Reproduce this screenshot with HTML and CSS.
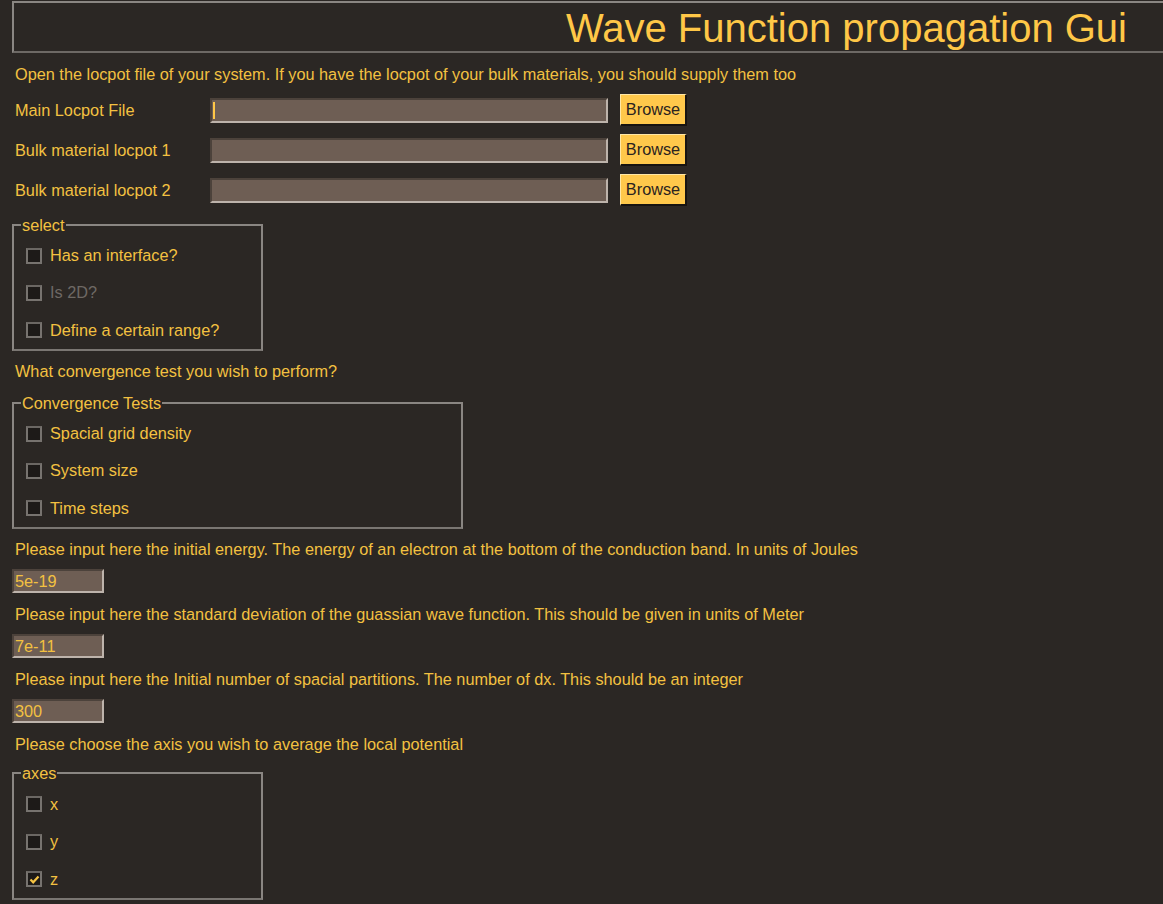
FILE: index.html
```html
<!DOCTYPE html>
<html>
<head>
<meta charset="utf-8">
<title>Wave Function propagation Gui</title>
<link rel="stylesheet" href="styles.css">
</head>
<body>
<div class="app">
  <div class="header"><span class="title">Wave Function propagation Gui</span></div>

  <p class="note intro">Open the locpot file of your system. If you have the locpot of your bulk materials, you should supply them too</p>

  <div class="file-row">
    <span class="file-label">Main Locpot File</span>
    <span class="entry wide focused"><span class="caret"></span></span>
    <span class="button">Browse</span>
  </div>
  <div class="file-row">
    <span class="file-label">Bulk material locpot 1</span>
    <span class="entry wide"></span>
    <span class="button">Browse</span>
  </div>
  <div class="file-row">
    <span class="file-label">Bulk material locpot 2</span>
    <span class="entry wide"></span>
    <span class="button">Browse</span>
  </div>

  <fieldset class="group narrow first-group">
    <legend>select</legend>
    <div class="check-row"><span class="box"></span><span>Has an interface?</span></div>
    <div class="check-row disabled"><span class="box"></span><span>Is 2D?</span></div>
    <div class="check-row"><span class="box"></span><span>Define a certain range?</span></div>
  </fieldset>

  <p class="note q">What convergence test you wish to perform?</p>

  <fieldset class="group medium">
    <legend>Convergence Tests</legend>
    <div class="check-row"><span class="box"></span><span>Spacial grid density</span></div>
    <div class="check-row"><span class="box"></span><span>System size</span></div>
    <div class="check-row"><span class="box"></span><span>Time steps</span></div>
  </fieldset>

  <p class="note after-group">Please input here the initial energy. The energy of an electron at the bottom of the conduction band. In units of Joules</p>
  <div class="entry small">5e-19</div>
  <p class="note after-entry">Please input here the standard deviation of the guassian wave function. This should be given in units of Meter</p>
  <div class="entry small">7e-11</div>
  <p class="note after-entry">Please input here the Initial number of spacial partitions. The number of dx. This should be an integer</p>
  <div class="entry small">300</div>
  <p class="note after-entry">Please choose the axis you wish to average the local potential</p>

  <fieldset class="group narrow axes">
    <legend>axes</legend>
    <div class="check-row"><span class="box"></span><span>x</span></div>
    <div class="check-row"><span class="box"></span><span>y</span></div>
    <div class="check-row"><span class="box checked"><svg viewBox="0 0 11 11" width="11" height="11"><path d="M1.5 5.5 L4.2 8.3 L9.5 2.5" fill="none" stroke="#f6c343" stroke-width="2.2"/></svg></span><span>z</span></div>
  </fieldset>
</div>
</body>
</html>
```

FILE: styles.css
```css
html, body {
  margin: 0;
  padding: 0;
  background: #2b2724;
}

body {
  font-family: "Liberation Sans", Arial, sans-serif;
  font-size: 16.3px;
  color: #f3c141;
  overflow: hidden;
  height: 904px;
}

.app {
  padding-top: 1px;
}

.header {
  margin-left: 12px;
  margin-right: -4px;
  height: 48px;
  border: 2px solid #8a8682;
  border-bottom-color: #6d6965;
  display: flex;
  justify-content: flex-end;
  align-items: center;
}

.title {
  font-size: 40px;
  color: #ffc747;
  padding-right: 38px;
  line-height: 48px;
  padding-top: 2px;
}

.note {
  margin: 0;
  padding-left: 15px;
  line-height: 20px;
  height: 20px;
  white-space: nowrap;
}

.intro {
  margin-top: 11px;
  margin-bottom: 6px;
}

.file-row {
  height: 40px;
  display: flex;
  align-items: center;
}

.file-label {
  width: 195px;
  padding-left: 15px;
}

.entry {
  display: block;
  box-sizing: border-box;
  background: #6e5e54;
  border-top: 2px solid #4c423b;
  border-left: 2px solid #4c423b;
  border-bottom: 2px solid #bdb3ab;
  border-right: 2px solid #bdb3ab;
  color: #f3c141;
}

.entry.wide {
  width: 398px;
  height: 25px;
  position: relative;
}

.caret {
  position: absolute;
  left: 1px;
  top: 2px;
  width: 2px;
  height: 17px;
  background: #ffc747;
}

.button {
  box-sizing: border-box;
  margin-left: 12px;
  width: 67px;
  height: 32px;
  background: #ffc84b;
  color: #2a2320;
  border-top: 1px solid #ffe7a6;
  border-left: 1px solid #ffe7a6;
  border-bottom: 2px solid #161311;
  border-right: 2px solid #161311;
  display: flex;
  align-items: center;
  justify-content: center;
}

.group {
  margin: 0 0 0 12px;
  padding: 0 0 0 12px;
  border: 2px solid #8a8682;
  border-bottom-color: #7a7672;
}

.group legend {
  padding: 0 1px;
  margin-left: -5px;
  line-height: 18px;
  height: 18px;
}

.narrow { width: 235px; }
.medium { width: 435px; }

.first-group { margin-top: 6px; }

.check-row {
  height: 37.3px;
  display: flex;
  align-items: center;
  gap: 8px;
}

.check-row:first-of-type {
  margin-top: 3px;
}

.box {
  box-sizing: border-box;
  width: 16px;
  height: 16px;
  background: #1d1a18;
  border: 2px solid #77736f;
  border-top-color: #6b6763;
  display: flex;
  align-items: center;
  justify-content: center;
}

.disabled { color: #6e6964; }

.q {
  margin-top: 10px;
  margin-bottom: 13px;
}

.after-group {
  margin-top: 10px;
  margin-bottom: 10px;
}

.entry.small {
  margin-left: 12px;
  width: 92px;
  height: 24px;
  line-height: 20px;
  padding-left: 1px;
}

.after-entry {
  margin-top: 11px;
  margin-bottom: 10px;
}

.axes {
  margin-top: 4px;
}

.axes .check-row:first-of-type {
  margin-top: 4px;
}
```
